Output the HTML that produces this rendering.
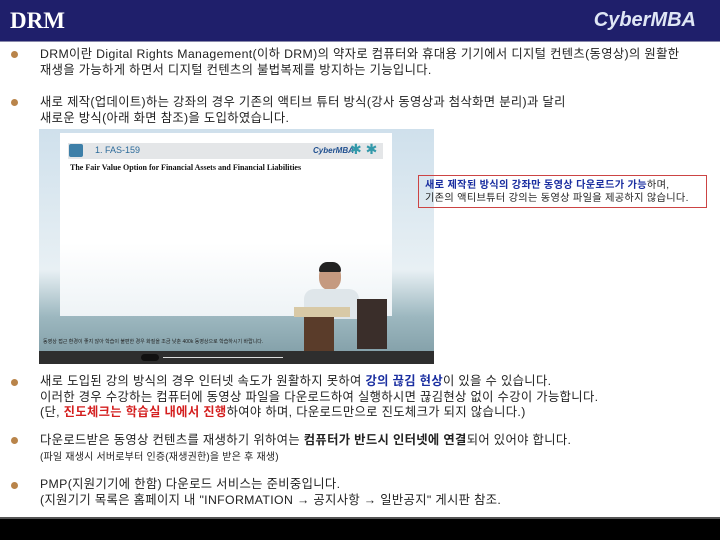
<!DOCTYPE html>
<html><head><meta charset="utf-8"><style>
*{margin:0;padding:0;box-sizing:border-box}
body{width:720px;height:540px;background:#fff;position:relative;overflow:hidden;font-family:"Liberation Sans","Noto Sans CJK KR","NanumGothic",sans-serif;color:#222}
.hdr{position:absolute;left:0;top:0;width:720px;height:42px;background:#1f1f6b;border-bottom:1px solid #8888aa}
.hdr .t{position:absolute;left:10px;top:8px;font-family:"Liberation Serif",serif;font-weight:bold;color:#fff;font-size:23px}
.hdr .c{position:absolute;right:24px;top:9px;font-style:italic;font-weight:bold;color:#dfe6f5;font-size:20px}
.p{position:absolute;left:40px;font-size:12.3px;letter-spacing:0.35px;line-height:15.5px;white-space:nowrap}
.b{position:absolute;left:11px;width:7px;height:7px;border-radius:50%;background:#b9844a}
.s{font-size:10px;letter-spacing:0.2px}
.foot{position:absolute;left:0;top:517px;width:720px;height:23px;background:#000;border-top:2px solid #555}
.img{position:absolute;left:39px;top:129px;width:395px;height:235px;background:linear-gradient(#cfe0ec,#e8f0f4 60%,#9cb7bf 80%,#7d9aa3)}
.slide{position:absolute;left:21px;top:4px;width:332px;height:183px;background:linear-gradient(#fff 60%,#eef3f6)}
.box{position:absolute;left:418px;top:175px;width:289px;height:33px;border:1px solid #c44;font-size:10.2px;letter-spacing:0.3px;line-height:13px;padding:3px 6px;white-space:nowrap}
</style></head><body>
<div class="hdr"><div class="t">DRM</div><div class="c">CyberMBA</div></div>
<div class="b" style="top:51px"></div>
<div class="p" style="top:47px">DRM이란 Digital Rights Management(이하 DRM)의 약자로 컴퓨터와 휴대용 기기에서 디지털 컨텐츠(동영상)의 원활한<br>재생을 가능하게 하면서 디지털 컨텐츠의 불법복제를 방지하는 기능입니다.</div>
<div class="b" style="top:99px"></div>
<div class="p" style="top:95px">새로 제작(업데이트)하는 강좌의 경우 기존의 액티브 튜터 방식(강사 동영상과 첨삭화면 분리)과 달리<br>새로운 방식(아래 화면 참조)을 도입하였습니다.</div>
<div class="img">
 <div class="slide">
  <div style="position:absolute;left:8px;top:10px;width:315px;height:16px;background:#e4e6e8"></div>
  <div style="position:absolute;left:9px;top:11px;width:14px;height:13px;background:#3d7fa8;border-radius:2px"></div>
  <div style="position:absolute;left:35px;top:12px;font-size:9px;color:#2b6a9a">1. FAS-159</div>
  <div style="position:absolute;left:253px;top:13px;font-size:8px;font-style:italic;font-weight:bold;color:#1f4f8f">CyberMBA</div>
  <div style="position:absolute;left:290px;top:8px;font-size:14px;color:#39a">✱ ✱</div>
  <div style="position:absolute;left:10px;top:30px;font-family:'Liberation Serif',serif;font-weight:bold;font-size:8px;color:#111">The Fair Value Option for Financial Assets and Financial Liabilities</div>
 </div>
 <div style="position:absolute;left:280px;top:135px;width:22px;height:26px;border-radius:45%;background:#c59a80"></div>
 <div style="position:absolute;left:280px;top:133px;width:22px;height:10px;border-radius:10px 10px 2px 2px;background:#222"></div>
 <div style="position:absolute;left:265px;top:160px;width:55px;height:30px;background:#dfe6ea;border-radius:10px 10px 0 0"></div>
 <div style="position:absolute;left:255px;top:178px;width:56px;height:10px;background:#d8c9a6"></div>
 <div style="position:absolute;left:265px;top:188px;width:30px;height:35px;background:#5a3c2a"></div>
 <div style="position:absolute;left:318px;top:170px;width:30px;height:50px;background:#3a2e2a"></div>
 <div style="position:absolute;left:0;top:222px;width:395px;height:13px;background:#2e2e2e"></div>
 <div style="position:absolute;left:102px;top:225px;width:18px;height:7px;border-radius:4px;background:#111"></div>
 <div style="position:absolute;left:124px;top:228px;width:120px;height:1px;background:#ddd"></div>
 <div style="position:absolute;left:4px;top:209px;width:280px;height:6px;font-size:5px;color:#222">동영상 접근 환경이 좋지 않아 학습이 불편한 경우 화질을 조금 낮춘 400k 동영상으로 학습하시기 바랍니다.</div>
</div>
<div class="box"><b style="color:#1a2ea0">새로 제작된 방식의 강좌만 동영상 다운로드가 가능</b>하며,<br>기존의 액티브튜터 강의는 동영상 파일을 제공하지 않습니다.</div>
<div class="b" style="top:379px"></div>
<div class="p" style="top:374px">새로 도입된 강의 방식의 경우 인터넷 속도가 원활하지 못하여 <b style="color:#1a2ea0">강의 끊김 현상</b>이 있을 수 있습니다.<br>이러한 경우 수강하는 컴퓨터에 동영상 파일을 다운로드하여 실행하시면 끊김현상 없이 수강이 가능합니다.<br>(단, <b style="color:#d41e1e">진도체크는 학습실 내에서 진행</b>하여야 하며, 다운로드만으로 진도체크가 되지 않습니다.)</div>
<div class="b" style="top:437px"></div>
<div class="p" style="top:433px">다운로드받은 동영상 컨텐츠를 재생하기 위하여는 <b>컴퓨터가 반드시 인터넷에 연결</b>되어 있어야 합니다.<br><span class="s">(파일 재생시 서버로부터 인증(재생권한)을 받은 후 재생)</span></div>
<div class="b" style="top:482px"></div>
<div class="p" style="top:477px">PMP(지원기기에 한함) 다운로드 서비스는 준비중입니다.<br>(지원기기 목록은 홈페이지 내 "INFORMATION → 공지사항 → 일반공지" 게시판 참조.</div>
<div class="foot"></div>
</body></html>
